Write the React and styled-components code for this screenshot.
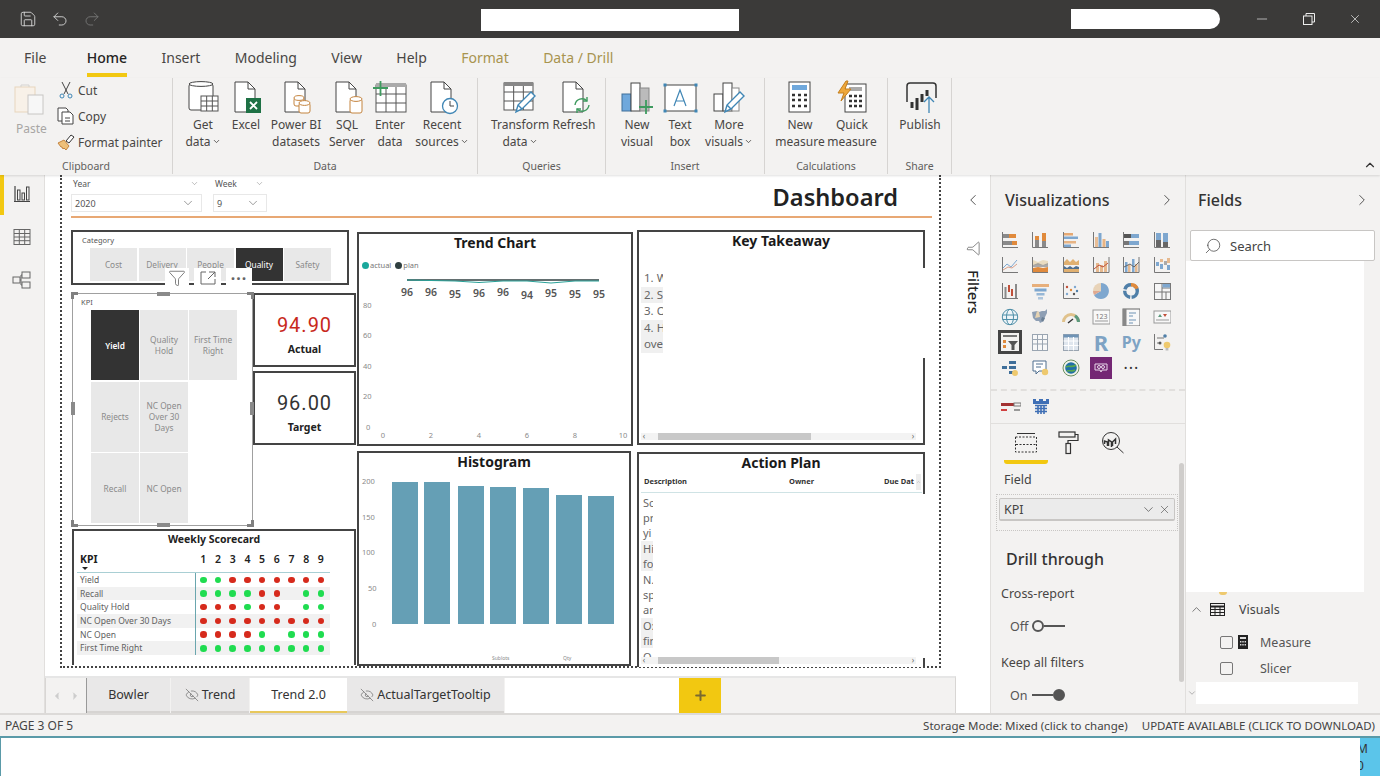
import styled, { createGlobalStyle } from "styled-components";
import {
  Save, Undo2, Redo2, Minus, X, ChevronRight, ChevronLeft, ChevronDown, ChevronUp,
  Search, Plus, Funnel, EyeOff,
} from "lucide-react";

const GlobalStyle = createGlobalStyle`
  * { box-sizing: border-box; }
  html, body { margin: 0; padding: 0; background: #fff; }
  body { font-family: "Noto Sans", "Open Sans", sans-serif; color: #333; }
`;

const O = "#e08a3c";
const B = "#7ea7cf";
const G = "#8a8a8a";
const AX = "#777";

const axes = <path d="M1.5 1v15.5H17" fill="none" stroke={AX} />;

// the 6x6 grid of visual types in the pane
const vizIcons = [
  <>{axes}<rect x="2" y="3" width="6" height="4" fill={G} /><rect x="8" y="3" width="7" height="4" fill={O} /><rect x="2" y="10" width="9" height="4" fill={G} /><rect x="11" y="10" width="5" height="4" fill={O} /></>,
  <>{axes}<rect x="4" y="9" width="4" height="7" fill={G} /><rect x="4" y="5" width="4" height="4" fill={O} /><rect x="11" y="10" width="4" height="6" fill={G} /><rect x="11" y="2" width="4" height="8" fill={O} /></>,
  <>{axes}<rect x="2" y="2" width="9" height="2.5" fill={O} opacity=".7" /><rect x="2" y="5.5" width="14" height="2.5" fill={B} /><rect x="2" y="10" width="12" height="2.5" fill={O} opacity=".6" /><rect x="2" y="13.5" width="7" height="2.5" fill={B} /></>,
  <>{axes}<rect x="3" y="6" width="3" height="10" fill={O} opacity=".5" /><rect x="6.5" y="2" width="3" height="14" fill={B} /><rect x="10.5" y="8" width="3" height="8" fill={O} opacity=".6" /><rect x="14" y="10" width="3" height="6" fill={B} /></>,
  <>{axes}<rect x="2" y="3" width="7" height="4" fill="#555" /><rect x="9" y="3" width="8" height="4" fill={B} /><rect x="2" y="10" width="5" height="4" fill="#777" /><rect x="7" y="10" width="10" height="4" fill={B} /></>,
  <>{axes}<rect x="3" y="2" width="5" height="7" fill={B} /><rect x="3" y="9" width="5" height="7" fill="#666" /><rect x="10" y="2" width="5" height="9" fill={B} /><rect x="10" y="11" width="5" height="5" fill="#666" /></>,
  <>{axes}<path d="M2 12l4-4 4 3 6-7" fill="none" stroke={B} /><path d="M2 14l5-3 4 1 5-4" fill="none" stroke="#d9a08a" /></>,
  <>{axes}<path d="M2 4l5 2 5-2 5 1v4H2z" fill="#e9dcc1" /><path d="M2 9l5-2 5 2 5-2v4H2z" fill={G} opacity=".7" /><path d="M2 12l5-1 5 1 5-1v5H2z" fill={O} /></>,
  <>{axes}<path d="M2 6l3-3 3 3 3-3 3 3 3-2v5H2z" fill="#e0b070" /><path d="M2 10l3 2 3-2 3 2 3-2 3 1v3H2z" fill="#4f6f8f" /><path d="M2 13h15v3H2z" fill="#e0b070" /></>,
  <><path d="M1.5 1v15.5H17V1" fill="none" stroke={AX} /><rect x="4" y="7" width="3" height="9" fill="#e6b98f" /><rect x="8" y="9" width="3" height="7" fill="#e6b98f" /><rect x="12" y="5" width="3" height="11" fill="#e6b98f" /><path d="M2 13l5-4 4 2 5-4" fill="none" stroke="#c0503a" /></>,
  <><path d="M1.5 1v15.5H17V1" fill="none" stroke={AX} /><rect x="3" y="6" width="2.5" height="10" fill={B} /><rect x="6" y="9" width="2.5" height="7" fill="#e6b98f" /><rect x="10" y="3" width="2.5" height="13" fill={B} /><rect x="13" y="8" width="2.5" height="8" fill="#e6b98f" /><path d="M2 11l6-3 4 3 5-5" fill="none" stroke="#666" /></>,
  <>{axes}<rect x="3" y="6" width="3" height="4" fill={B} /><rect x="7" y="3" width="3" height="3" fill="#e6b98f" /><rect x="7" y="8" width="3" height="5" fill={B} /><rect x="11" y="5" width="3" height="4" fill="#aaa" /><rect x="14" y="2" width="3" height="5" fill="#e6b98f" /><rect x="14" y="9" width="3" height="5" fill={B} /></>,
  <>{axes}<rect x="3.5" y="5" width="2" height="11" fill={G} /><rect x="7" y="3" width="2" height="7" fill="#c0503a" /><rect x="10" y="7" width="2" height="7" fill="#c0503a" /><rect x="14" y="2" width="2" height="14" fill={G} /></>,
  <><rect x="1" y="2" width="17" height="3" fill={O} opacity=".65" /><rect x="3.5" y="6.5" width="12" height="3" fill={B} /><rect x="5.5" y="11" width="8" height="2.5" fill={B} opacity=".8" /><rect x="7" y="15" width="5" height="2.5" fill={B} opacity=".6" /></>,
  <>{axes}<circle cx="5" cy="5" r="1.2" fill="#c0503a" /><circle cx="9" cy="8" r="1.2" fill={O} /><circle cx="5" cy="12" r="1.2" fill={B} /><circle cx="13" cy="5" r="1.2" fill={B} /><circle cx="12" cy="12" r="1.2" fill="#555" /><circle cx="15" cy="9" r="1.2" fill="#4f7fa8" /></>,
  <><path d="M9 9V1a8 8 0 1 1-7 12z" fill={B} /><path d="M9 9l-7 4a8 8 0 0 1-1-4z" fill="#e0a990" /><path d="M9 9H1a8 8 0 0 1 8-8z" fill="#e8d3b8" /></>,
  <><circle cx="9" cy="9" r="6.3" fill="none" stroke="#4f7fa8" strokeWidth="3.4" strokeDasharray="9 1.5" /><path d="M9 2.7a6.3 6.3 0 0 1 6 4" fill="none" stroke={O} strokeWidth="3.4" /></>,
  <><rect x="1.5" y="1.5" width="16" height="16" fill="#f6f6f6" stroke="#777" /><path d="M1.5 10h16M9 1.5V17.5M9 6h8.5M13 10v7.5" stroke="#777" fill="none" /><rect x="9.5" y="2" width="7.5" height="3.5" fill={B} /></>,
  <><circle cx="9" cy="9" r="7.7" fill="#eef4f8" stroke="#4f8fa8" /><ellipse cx="9" cy="9" rx="3.5" ry="7.7" fill="none" stroke="#4f8fa8" /><path d="M1.5 7h15M1.5 11.5h15" stroke="#4f8fa8" fill="none" /></>,
  <><path d="M1 4l5-1 2 1 3-1 3 0 2-2 0 4-2 4-1 3-2 2-2 1-1-2-3 0-3-3z" fill="#8e9fb4" /><path d="M6 3l2 1 1 5-5 1z" fill="#e5d3b3" /><path d="M11 9l3 1-2 4-2-2z" fill="#6a7f94" /></>,
  <><path d="M1.5 14a7.5 7.5 0 0 1 15 0" fill="none" stroke="#e0c28c" strokeWidth="3" /><path d="M13 7.7a7.5 7.5 0 0 1 3.5 6.3" fill="none" stroke="#5d9a7d" strokeWidth="3" /><path d="M6 15l5-4" stroke="#333" strokeWidth="1.4" /></>,
  <><rect x="1" y="2" width="17" height="14" fill="#f8f8f8" stroke="#999" /><text x="9.5" y="10.5" textAnchor="middle" fontSize="7" fontFamily="Noto Sans" fill="#777">123</text><path d="M3 13h13" stroke="#999" /></>,
  <><rect x="1" y="1" width="17" height="17" fill="#f8f8f8" stroke="#666" /><rect x="1" y="1" width="3.5" height="17" fill="#888" /><path d="M7 5h7M7 8h4M7 12h7M7 15h4" stroke="#6f93b5" fill="none" /></>,
  <><rect x="1" y="3" width="17" height="12" fill="#f8f8f8" stroke="#999" /><path d="M5 9l2-3 2 3z" fill="#5d9a7d" /><path d="M10 6h4l-2 3z" fill="#c0503a" /><path d="M3 12h13" stroke="#999" /></>,
  <></>,
  <><rect x="1.5" y="1.5" width="15" height="16" fill="#f8f8f8" stroke="#9aa5b1" /><path d="M1.5 6.5h15M1.5 11h15M6.5 1.5v16M11.5 1.5v16" stroke="#9aa5b1" fill="none" /></>,
  <><rect x="1.5" y="1.5" width="15" height="16" fill="#dfe6ee" stroke="#9aa5b1" /><rect x="1.5" y="1.5" width="15" height="3" fill="#6f93b5" /><path d="M1.5 8h15M1.5 12.5h15M6.5 4v13.5M11.5 4v13.5" stroke="#fff" fill="none" /></>,
  <></>,
  <></>,
  <><path d="M1.5 1v15.5H10" fill="none" stroke={AX} /><path d="M4 5h7M4 10h4" stroke="#777" /><circle cx="12" cy="3" r="1.8" fill="#4f7fa8" /><circle cx="7" cy="10" r="1.5" fill="#555" /><circle cx="14" cy="12" r="3.3" fill="#eec96e" /><rect x="12.6" y="15" width="2.8" height="2.5" fill="#bbb" /></>,
  <><rect x="1" y="7" width="5" height="3" fill="#3f6f9a" /><rect x="8" y="2" width="7" height="3" fill="#3f6f9a" /><rect x="8" y="7" width="7" height="3" fill="#3f6f9a" /><rect x="8" y="12" width="4" height="3" fill="#3f6f9a" /><circle cx="14" cy="14" r="3" fill="#eec96e" /></>,
  <><path d="M2 2h13v10H8l-3 3v-3H2z" fill="#fff" stroke="#4f6f8f" /><path d="M5 5h7M5 8h5" stroke="#4f6f8f" /><circle cx="14" cy="13" r="3.2" fill="#eec96e" /></>,
  <><circle cx="9" cy="9" r="8" fill="#eef2e8" stroke="#6b8f5f" /><circle cx="9" cy="9" r="5.8" fill="#1f6fa8" /><path d="M4 8c3-2 6 1 10-2M5 12c3-1 5 1 8-1" stroke="#58a84e" strokeWidth="1.6" fill="none" /></>,
  <></>,
  <></>,
];

const Chart = () => (
  <ChartSvg viewBox="0 0 272 170" width="272" height="170">
    <g fontFamily="Noto Sans" fontSize="7.5" fill="#8a8a8a">
      {[[80, 35], [60, 65], [40, 96], [20, 126], [0, 157]].map(([t, y]) => (
        <text key={t} x={t ? 4 : 7} y={y}>{t}</text>
      ))}
      {[0, 2, 4, 6, 8, 10].map((t) => (
        <text key={t} x={24 + t * 24} y={165} textAnchor="middle">{t}</text>
      ))}
    </g>
    <path d="M48 7H240" stroke="#2f3f40" strokeWidth="1.4" fill="none" />
    <path d="M48 7l48 1 24 1.500 24-1.500 24 0 24 2 24-2H240" stroke="#2aa198" strokeWidth="1.2" fill="none" />
    <g fontFamily="Noto Sans" fontSize="10.5" fontWeight="600" fill="#555" textAnchor="middle">
      {[[96, 23], [96, 23], [95, 25], [96, 24], [96, 23], [94, 26], [95, 24], [95, 25], [95, 25]].map(([v, y], i) => (
        <text key={i} x={48 + i * 24} y={y}>{v}</text>
      ))}
    </g>
  </ChartSvg>
);

const bars = [[33, 482], [65, 482], [99, 486], [131, 487], [164, 488], [197, 495], [229, 496]];

const Histogram = () => (
  <ChartSvg viewBox="0 0 270 192" width="270" height="192">
    <g fontFamily="Noto Sans" fontSize="7.5" fill="#8a8a8a">
      {[[200, 12], [150, 48], [100, 83], [50, 119], [0, 155]].map(([t, y]) => (
        <text key={t} x={t === 0 ? 13 : t === 50 ? 9 : 3} y={y}>{t}</text>
      ))}
      <text x="133" y="188" fontSize="5">Sublots</text>
      <text x="204" y="188" fontSize="5">Qty</text>
    </g>
    {bars.map(([x, top]) => (
      <rect key={x} x={x} y={top - 472} width="26" height={624 - top} fill="#659fb5" />
    ))}
  </ChartSvg>
);

const RibbonGlyph = ({ children }) => (
  <svg width="36" height="36" viewBox="0 0 36 36" fill="none">{children}</svg>
);

const doc = <path d="M7 2h13l7 7v23H7z" fill="#fff" stroke="#444" />;
const fold = <path d="M20 2v7h7" stroke="#444" />;
const cyl = (x, y, w, h, stroke) => (
  <>
    <rect x={x} y={y + 2} width={w} height={h - 2} rx="2" fill="#fff" stroke={stroke} />
    <ellipse cx={x + w / 2} cy={y + 2} rx={w / 2} ry="2.4" fill="#fff" stroke={stroke} />
  </>
);
const tableGlyph = (x, y, w, h) => (
  <>
    <rect x={x} y={y} width={w} height={h} fill="#fff" stroke="#555" />
    <path d={`M${x} ${y + h / 3}h${w}M${x} ${y + (2 * h) / 3}h${w}M${x + w / 3} ${y}v${h}M${x + (2 * w) / 3} ${y}v${h}`} stroke="#555" />
  </>
);
const pencil = <path d="M14 32l2-7 13-13 4 4-13 13z M16 25l4 4" fill="#fff" stroke="#3f86b5" strokeWidth="1.4" />;

const ribbonIcons = {
  data: <RibbonGlyph>{cyl(4, 2, 24, 28, "#444")}{tableGlyph(16, 16, 17, 15)}</RibbonGlyph>,
  excel: <RibbonGlyph>{doc}{fold}<rect x="18" y="18" width="15" height="15" fill="#1e7145" /><path d="M22 22l7 7M29 22l-7 7" stroke="#fff" strokeWidth="1.8" /></RibbonGlyph>,
  datasets: <RibbonGlyph>{doc}{fold}{cyl(16, 16, 10, 10, "#c4843f")}{cyl(21, 21, 11, 12, "#c4843f")}</RibbonGlyph>,
  sql: <RibbonGlyph>{doc}{fold}{cyl(21, 17, 12, 16, "#c4843f")}</RibbonGlyph>,
  enter: <RibbonGlyph>{tableGlyph(4, 5, 30, 27)}<rect x="4" y="3" width="30" height="4" fill="#aaa" /><path d="M1 8h15M8.5 1v15" stroke="#3e9b5f" strokeWidth="1.8" /></RibbonGlyph>,
  recent: <RibbonGlyph>{doc}{fold}<circle cx="26" cy="26" r="7.5" fill="#fff" stroke="#3f86b5" strokeWidth="1.3" /><path d="M26 21v5h4" stroke="#444" /></RibbonGlyph>,
  transform: <RibbonGlyph>{tableGlyph(2, 3, 29, 27)}<rect x="2" y="2" width="29" height="4" fill="#888" />{pencil}</RibbonGlyph>,
  refresh: <RibbonGlyph>{doc}{fold}<path d="M19 25a7 7 0 0 1 12-4M33 25a7 7 0 0 1-12 4" stroke="#3e9b5f" strokeWidth="1.4" /><path d="M31 17v4h-4M21 33v-4h4" stroke="#3e9b5f" strokeWidth="1.4" /></RibbonGlyph>,
  newVisual: <RibbonGlyph><rect x="3" y="14" width="9" height="17" fill="#6fa8dc" stroke="#3f6f9a" /><rect x="12" y="3" width="9" height="28" fill="#fff" stroke="#444" /><rect x="21" y="8" width="9" height="23" fill="#bbb" stroke="#888" /><path d="M20 27h14M27 20v14" stroke="#3e9b5f" strokeWidth="1.8" /></RibbonGlyph>,
  textBox: <RibbonGlyph><rect x="3" y="5" width="31" height="26" fill="#fff" stroke="#444" /><path d="M12 26l6-16 6 16M14.5 21h7" stroke="#3f86b5" strokeWidth="1.2" />{[[3, 5], [34, 5], [3, 31], [34, 31]].map(([x, y]) => <rect key={x + "" + y} x={x - 1.5} y={y - 1.5} width="3" height="3" fill="#3f86b5" />)}</RibbonGlyph>,
  more: <RibbonGlyph><rect x="3" y="14" width="9" height="17" fill="#fff" stroke="#444" /><rect x="12" y="3" width="9" height="28" fill="#fff" stroke="#444" /><rect x="21" y="8" width="7" height="23" fill="#fff" stroke="#888" />{pencil}</RibbonGlyph>,
  measure: <RibbonGlyph><rect x="7" y="2" width="21" height="30" fill="#fff" stroke="#444" /><rect x="10" y="5" width="15" height="5" fill="#6fa8dc" /><path d="M10 15h3M16 15h3M22 15h3M10 20h3M16 20h3M22 20h3M10 26h3M16 26h3M22 26h3" stroke="#333" strokeWidth="2.4" /></RibbonGlyph>,
  quick: <RibbonGlyph><rect x="11" y="4" width="21" height="28" fill="#fff" stroke="#444" /><rect x="15" y="7" width="13" height="4" fill="#aaa" /><path d="M15 16h3M20 16h3M25 16h3M15 21h3M20 21h3M25 21h3M15 26h3M20 26h3M25 26h3" stroke="#333" strokeWidth="2.4" /><path d="M12 1L4 13h6l-3 8 10-12h-6l3-8z" fill="#eea83c" stroke="#c47e1c" /></RibbonGlyph>,
  publish: <RibbonGlyph><path d="M5 22V6a3 3 0 0 1 3-3h23a3 3 0 0 1 3 3v12" stroke="#333" strokeWidth="1.5" /><path d="M10 22v6M15 18v12M20 14v8M25 10v6" stroke="#333" strokeWidth="3" /><path d="M27 33V17M22 22l5-5 5 5" stroke="#3f86b5" strokeWidth="1.3" /></RibbonGlyph>,
};

const CutIcon = () => (
  <svg width="18" height="18" viewBox="0 0 18 18" fill="none">
    <path d="M5 1l6 12M13 1L7 13" stroke="#444" />
    <circle cx="5" cy="15" r="2" stroke="#3f86b5" /><circle cx="13" cy="15" r="2" stroke="#3f86b5" />
  </svg>
);
const CopyIcon = () => (
  <svg width="18" height="18" viewBox="0 0 18 18" fill="none">
    <path d="M5 14H1V1h8l2 2v2" stroke="#444" fill="#fff" />
    <path d="M5 5h8l3 3v9H5z M8 11h5M8 14h5" stroke="#444" fill="#fff" />
  </svg>
);
const PainterIcon = () => (
  <svg width="18" height="18" viewBox="0 0 18 18" fill="none">
    <path d="M1 10l6-3 5 6-3 4-2-2-1 1-1-2-1 0z" fill="#eec07a" stroke="#c4843f" />
    <path d="M9 8l5-6 3 2-5 6z" fill="#fff" stroke="#333" />
  </svg>
);

const ScoreDots = {
  Yield: "ggrrrrrrr",
  Recall: "ggggrr-gg",
  "Quality Hold": "rrrgrr-gg",
  "NC Open Over 30 Days": "rrrrrrrrr",
  "NC Open": "rrrrg-ggg",
  "First Time Right": "ggggggggg",
};

const actionLines = [["Sc", "pr", "yi"], ["Hi", "fo"], ["N.", "sp", "ar"], ["O:", "fir"], ["O"]];

export default function App() {
  return (
    <Shell>
      <GlobalStyle />
      <TitleBar>
        <QuickTools>
          <Save size={18} strokeWidth={1.2} color="#d8d8d8" />
          <Undo2 size={18} strokeWidth={1.2} color="#d8d8d8" />
          <Redo2 size={18} strokeWidth={1.2} color="#777" />
        </QuickTools>
        <TitleBlank />
        <UserBlank />
        <WindowButtons>
          <Minus size={16} strokeWidth={1} color="#eee" />
          <RestoreIcon />
          <X size={14} strokeWidth={1.2} color="#eee" />
        </WindowButtons>
      </TitleBar>

      <MenuTabs>
        <MenuTab>File</MenuTab>
        <MenuTab $active>Home</MenuTab>
        <MenuTab>Insert</MenuTab>
        <MenuTab>Modeling</MenuTab>
        <MenuTab>View</MenuTab>
        <MenuTab>Help</MenuTab>
        <MenuTab $context>Format</MenuTab>
        <MenuTab $context>Data / Drill</MenuTab>
      </MenuTabs>

      <Ribbon>
        <RibbonGroup $w={173} label="Clipboard">
          <PasteButton>
            <svg width="32" height="33" viewBox="0 0 32 33" fill="none">
              <rect x="2" y="5" width="20" height="25" fill="#f8f1e8" stroke="#e8d5bd" />
              <path d="M8 5V3h8v2" stroke="#d5d3d0" />
              <rect x="15" y="13" width="15" height="19" fill="#f7f7f7" stroke="#c8c6c4" />
            </svg>
            <span>Paste</span>
          </PasteButton>
          <SmallTools>
            <SmallTool><CutIcon /> Cut</SmallTool>
            <SmallTool><CopyIcon /> Copy</SmallTool>
            <SmallTool><PainterIcon /> Format painter</SmallTool>
          </SmallTools>
        </RibbonGroup>
        <RibbonGroup $w={305} $pad={8} label="Data">
          <RibbonButton $w={44} icon={ribbonIcons.data} top="Get" bottom="data" caret />
          <RibbonButton $w={42} icon={ribbonIcons.excel} top="Excel" />
          <RibbonButton $w={58} icon={ribbonIcons.datasets} top="Power BI" bottom="datasets" />
          <RibbonButton $w={44} icon={ribbonIcons.sql} top="SQL" bottom="Server" />
          <RibbonButton $w={42} icon={ribbonIcons.enter} top="Enter" bottom="data" />
          <RibbonButton $w={62} icon={ribbonIcons.recent} top="Recent" bottom="sources" caret />
        </RibbonGroup>
        <RibbonGroup $w={128} $pad={12} label="Queries">
          <RibbonButton $w={60} icon={ribbonIcons.transform} top="Transform" bottom="data" caret />
          <RibbonButton $w={48} icon={ribbonIcons.refresh} top="Refresh" />
        </RibbonGroup>
        <RibbonGroup $w={159} $pad={9} label="Insert">
          <RibbonButton $w={44} icon={ribbonIcons.newVisual} top="New" bottom="visual" />
          <RibbonButton $w={42} icon={ribbonIcons.textBox} top="Text" bottom="box" />
          <RibbonButton $w={56} icon={ribbonIcons.more} top="More" bottom="visuals" caret />
        </RibbonGroup>
        <RibbonGroup $w={123} $pad={9} label="Calculations">
          <RibbonButton $w={52} icon={ribbonIcons.measure} top="New" bottom="measure" />
          <RibbonButton $w={52} icon={ribbonIcons.quick} top="Quick" bottom="measure" />
        </RibbonGroup>
        <RibbonGroup $w={64} $pad={7} label="Share">
          <RibbonButton $w={50} icon={ribbonIcons.publish} top="Publish" />
        </RibbonGroup>
        <RibbonEnd>
          <ChevronUp size={14} strokeWidth={2} color="#333" />
        </RibbonEnd>
      </Ribbon>

      <Body>
        <Rail>
          <RailItem $active>
            <svg width="18" height="18" viewBox="0 0 18 18" fill="none" stroke="#444">
              <path d="M2 1v15M1 16.5h16" strokeWidth="1.2" />
              <rect x="4.5" y="5" width="2.5" height="10" /><rect x="9" y="8" width="2.5" height="7" /><rect x="13.5" y="2" width="2.5" height="13" />
            </svg>
          </RailItem>
          <RailItem>
            <svg width="18" height="18" viewBox="0 0 18 18" fill="none" stroke="#666">
              <rect x="1" y="1.5" width="16" height="15" />
              <path d="M1 5.5h16M1 9h16M1 12.700h16M6.300 1.500v15M11.700 1.500v15" />
            </svg>
          </RailItem>
          <RailItem>
            <svg width="20" height="20" viewBox="0 0 20 20" fill="none" stroke="#666">
              <rect x="1" y="7" width="7" height="6" /><rect x="10" y="2" width="8" height="6" />
              <rect x="10" y="12" width="8" height="6" /><path d="M8 10h1V5h1M9 10v5h1" />
            </svg>
          </RailItem>
        </Rail>

        <Center>
          <Canvas>
            <Page>
              <PageHeader>
                <Slicer $w={131} $mr={11}>
                  <SlicerHead>Year <ChevronDown size={9} strokeWidth={1} /></SlicerHead>
                  <SlicerBox>2020 <ChevronDown size={14} strokeWidth={1} /></SlicerBox>
                </Slicer>
                <Slicer $w={54}>
                  <SlicerHead>Week <ChevronDown size={9} strokeWidth={1} /></SlicerHead>
                  <SlicerBox>9 <ChevronDown size={14} strokeWidth={1} /></SlicerBox>
                </Slicer>
                <DashboardTitle>Dashboard</DashboardTitle>
              </PageHeader>

              <Board>
                <LeftColumn>
                  <CategoryBox>
                    <SmallCaption>Category</SmallCaption>
                    <CategoryRow>
                      <Tile>Cost</Tile>
                      <Tile>Delivery</Tile>
                      <Tile>People</Tile>
                      <Tile $on>Quality</Tile>
                      <Tile>Safety</Tile>
                    </CategoryRow>
                  </CategoryBox>

                  <KpiRow>
                    <KpiBox>
                      <VisualHeader>
                        <HeaderButton $w={24}><Funnel size={18} strokeWidth={1} color="#555" /></HeaderButton>
                        <HeaderButton $w={27}>
                          <svg width="16" height="14" viewBox="0 0 16 14" fill="none" stroke="#666">
                            <path d="M6 1H1v12h14V8M9 1h6v5M15 1L8 8" />
                          </svg>
                        </HeaderButton>
                        <HeaderButton $w={26}><Dots>···</Dots></HeaderButton>
                      </VisualHeader>
                      <Corner $v="top" $h="left" />
                      <Corner $v="top" $h="right" />
                      <Corner $v="bottom" $h="left" />
                      <Corner $v="bottom" $h="right" />
                      <EdgeHandle $side="top" />
                      <EdgeHandle $side="bottom" />
                      <EdgeHandle $side="left" />
                      <EdgeHandle $side="right" />
                      <SmallCaption>KPI</SmallCaption>
                      <KpiGrid>
                        <Tile $on $bold>Yield</Tile>
                        <Tile>Quality<br />Hold</Tile>
                        <Tile>First Time<br />Right</Tile>
                        <Tile>Rejects</Tile>
                        <Tile>NC Open<br />Over 30<br />Days</Tile>
                        <span />
                        <Tile>Recall</Tile>
                        <Tile>NC Open</Tile>
                      </KpiGrid>
                    </KpiBox>
                    <KpiCards>
                      <CardBox $h={74}>
                        <CardValue $red>94.90</CardValue>
                        <CardLabel>Actual</CardLabel>
                      </CardBox>
                      <CardBox $h={74}>
                        <CardValue>96.00</CardValue>
                        <CardLabel>Target</CardLabel>
                      </CardBox>
                    </KpiCards>
                  </KpiRow>

                  <ScoreBox>
                    <ScoreTitle>Weekly Scorecard</ScoreTitle>
                    <ScoreTable>
                      <ScoreHead>
                        <span>KPI<SortArrow /></span>
                        {[1, 2, 3, 4, 5, 6, 7, 8, 9].map((n) => <b key={n}>{n}</b>)}
                      </ScoreHead>
                      {Object.entries(ScoreDots).map(([name, dots], i) => (
                        <ScoreRow key={name} $alt={i % 2 === 1}>
                          <ScoreName>{name}</ScoreName>
                          {dots.split("").map((d, j) => (
                            <DotCell key={j}>{d !== "-" && <Dot $c={d} />}</DotCell>
                          ))}
                        </ScoreRow>
                      ))}
                    </ScoreTable>
                  </ScoreBox>
                </LeftColumn>

                <MiddleColumn>
                  <Panel $w={276} $h={214}>
                    <PanelTitle>Trend Chart</PanelTitle>
                    <Legend>
                      <LegendDot $c="#1aa89c" /> actual <LegendDot $c="#2f3f40" /> plan
                    </Legend>
                    <Chart />
                  </Panel>
                  <Panel $w={274} $h={215}>
                    <PanelTitle>Histogram</PanelTitle>
                    <Histogram />
                  </Panel>
                </MiddleColumn>

                <RightColumn>
                  <Panel $w={288} $h={215}>
                    <Cover $top={36} $h={90} />
                    <PanelTitle>Key Takeaway</PanelTitle>
                    <TakeList>
                      <TakeRow>1. W</TakeRow>
                      <TakeRow $alt>2. S</TakeRow>
                      <TakeRow>3. O</TakeRow>
                      <TakeRow $alt>4. H<br />over</TakeRow>
                    </TakeList>
                    <HScroll $left={17} $thumb={153} />
                  </Panel>
                  <Panel $w={288} $h={215} $open>
                    <Cover $top={40} $h={164} />
                    <PanelTitle>Action Plan</PanelTitle>
                    <ActionHead>
                      <span>Description</span>
                      <span>Owner</span>
                      <DueCol>Due Dat</DueCol>
                      <ScrollUp><ChevronUp size={6} strokeWidth={1.5} /></ScrollUp>
                    </ActionHead>
                    <ActionBody>
                      {actionLines.map((lines, i) => (
                        <ActionRow key={i} $alt={i % 2 === 1}>
                          {lines.map((t) => <div key={t}>{t}</div>)}
                        </ActionRow>
                      ))}
                    </ActionBody>
                    <HScroll $left={17} $thumb={121} />
                  </Panel>
                </RightColumn>
              </Board>
            </Page>
          </Canvas>

          <PageTabs>
            <NavBox>
              <ChevronLeft size={12} color="#ccc" fill="#ccc" />
              <ChevronRight size={12} color="#ccc" fill="#ccc" />
            </NavBox>
            <PageTab $w={83}>Bowler</PageTab>
            <PageTab $w={78}><EyeOff size={14} strokeWidth={1} color="#555" />Trend</PageTab>
            <PageTab $w={97} $active>Trend 2.0</PageTab>
            <PageTab $w={157}><EyeOff size={14} strokeWidth={1} color="#555" />ActualTargetTooltip</PageTab>
            <TabBlank />
            <AddTab><Plus size={15} strokeWidth={3.2} color="#7a6a30" /></AddTab>
          </PageTabs>
        </Center>

        <FiltersRail>
          <ChevronLeft size={18} strokeWidth={1.1} color="#333" />
          <FunnelSide>
            <Funnel size={15} strokeWidth={1} color="#444" />
          </FunnelSide>
          <FiltersLabel>Filters</FiltersLabel>
        </FiltersRail>

        <VizPane>
          <PaneHead $pl={14} $pr={9}>
            <PaneTitle>Visualizations</PaneTitle>
            <ChevronRight size={18} strokeWidth={1.1} color="#333" />
          </PaneHead>
          <VizGrid>
            {vizIcons.map((icon, i) => (
              <VizCell key={i} $purple={i === 33}>
                {i === 24 ? <SlicerGlyph /> : null}
                {i === 27 ? <ScriptMark>R</ScriptMark> : null}
                {i === 28 ? <ScriptMark $small>Py</ScriptMark> : null}
                {i === 33 ? <PowerApps /> : null}
                {i === 34 ? <MoreDots>···</MoreDots> : null}
                {![24, 27, 28, 33, 34].includes(i) ? (
                  <svg width="18" height="18" viewBox="0 0 18 18">{icon}</svg>
                ) : null}
              </VizCell>
            ))}
          </VizGrid>
          <ExtraIcons>
            <svg width="20" height="12" viewBox="0 0 20 12">
              <rect x="0" y="2" width="13" height="3" fill="#a33232" /><rect x="13" y="2" width="7" height="3" fill="none" stroke="#777" />
              <rect x="0" y="8" width="6" height="2" fill="#d04040" /><rect x="13" y="8" width="6" height="2" fill="#999" />
            </svg>
            <svg width="18" height="18" viewBox="0 0 18 18" fill="#3f6fb5">
              <path d="M1 1h3v2h3V1h4v2h3V1h3v5H1z" />
              <path d="M3 7.500h12M3 10.500h12M3 13.500h12M6 7v9M9 7v9M12 7v9" stroke="#3f6fb5" strokeWidth="1.6" />
            </svg>
          </ExtraIcons>
          <PaneTabs>
            <PaneTab $active>
              <svg width="24" height="22" viewBox="0 0 24 22" fill="none" stroke="#333">
                <path d="M3 1.500h18" />
                <rect x="1.500" y="5" width="21" height="15" strokeDasharray="2 1.500" />
                <path d="M2 12.500h20" strokeDasharray="2 1.500" />
              </svg>
            </PaneTab>
            <PaneTab>
              <svg width="22" height="24" viewBox="0 0 22 24" fill="none" stroke="#333" strokeWidth="1.2">
                <rect x="1" y="1" width="16" height="5" />
                <path d="M17 3.500h3v6H10v3" />
                <rect x="8" y="12.500" width="4.500" height="10" />
              </svg>
            </PaneTab>
            <PaneTab>
              <svg width="24" height="24" viewBox="0 0 24 24" fill="none" stroke="#333">
                <circle cx="10" cy="10" r="8.500" />
                <path d="M16 16l6.500 6" />
                <path d="M3.500 13v-3l3 1v4M7.500 15V9l3 2v5M11.500 15v-4l3-3v5" strokeWidth="1.500" />
              </svg>
            </PaneTab>
          </PaneTabs>
          <FieldLabel>Field</FieldLabel>
          <FieldWell>
            <FieldPill>
              <span>KPI</span>
              <PillIcons>
                <ChevronDown size={15} strokeWidth={1} color="#333" />
                <X size={13} strokeWidth={1} color="#333" />
              </PillIcons>
            </FieldPill>
          </FieldWell>
          <DrillTitle>Drill through</DrillTitle>
          <OptionLabel>Cross-report</OptionLabel>
          <Toggle>
            <span>Off</span>
            <ToggleSwitch><ToggleKnob /><ToggleTrack /></ToggleSwitch>
          </Toggle>
          <OptionLabel $mt={19}>Keep all filters</OptionLabel>
          <Toggle>
            <span>On</span>
            <ToggleSwitch $on><ToggleKnob $on /><ToggleTrack /></ToggleSwitch>
          </Toggle>
          <PaneScroll />
        </VizPane>

        <FieldsPane>
          <PaneHead $pl={12} $pr={9}>
            <PaneTitle>Fields</PaneTitle>
            <ChevronRight size={18} strokeWidth={1.1} color="#333" />
          </PaneHead>
          <SearchBox>
            <Search size={18} strokeWidth={1} style={{ transform: "scaleX(-1)" }} />
            Search
          </SearchBox>
          <FieldsBlank />
          <TableRow>
            <ChevronUp size={15} strokeWidth={1} color="#333" />
            <svg width="15" height="13" viewBox="0 0 15 13" fill="none" stroke="#222">
              <rect x=".5" y=".5" width="14" height="12" />
              <path d="M.5 3.500h14" strokeWidth="2" />
              <path d="M.5 6.500h14M.5 9.500h14M5 3v10M10 3v10" />
            </svg>
            <span>Visuals</span>
          </TableRow>
          <CheckRow $mt={3}>
            <CheckBox />
            <CalcSlot>
              <svg width="10" height="14" viewBox="0 0 10 14" fill="#222">
                <path d="M0 0h10v14H0z" />
                <path d="M2 2h6v2H2zM2 6h1.400v1.400H2zM4.300 6h1.400v1.400H4.300zM6.600 6H8v1.400H6.600zM2 9h1.400v1.400H2zM4.300 9h1.400v1.400H4.300zM6.600 9H8v1.400H6.600z" fill="#ddd" />
              </svg>
            </CalcSlot>
            Measure
          </CheckRow>
          <CheckRow>
            <CheckBox />
            <CalcSlot />
            Slicer
          </CheckRow>
          <FieldsFooter>
            <ChevronDown size={10} strokeWidth={1} color="#555" />
            <FooterBlank />
          </FieldsFooter>
        </FieldsPane>
      </Body>

      <StatusBar>
        <span>PAGE 3 OF 5</span>
        <StatusRight>
          <span>Storage Mode: Mixed (click to change)</span>
          <span>UPDATE AVAILABLE (CLICK TO DOWNLOAD)</span>
        </StatusRight>
      </StatusBar>
      <Taskbar>
        <TaskTile><span>M</span><span>0</span></TaskTile>
      </Taskbar>
    </Shell>
  );
}

const RestoreIcon = () => (
  <svg width="12" height="12" viewBox="0 0 12 12" fill="none" stroke="#eee">
    <rect x=".5" y="3" width="8.500" height="8.500" />
    <path d="M3 3V.5h8.500V9H9" />
  </svg>
);

const SlicerGlyph = () => (
  <svg width="24" height="24" viewBox="0 0 24 24">
    <rect x="1.500" y="1.500" width="21" height="21" fill="#f3f2f1" stroke="#444" strokeWidth="3" />
    <rect x="5" y="5" width="14" height="2" fill="#777" />
    <path d="M5 10h3v3H5zM5 15h3v3H5z" fill="#e08a3c" />
    <path d="M10 11h10l-3.500 4v5h-3v-5z" fill="#555" />
  </svg>
);

const PowerApps = () => (
  <svg width="14" height="10" viewBox="0 0 14 10" fill="none" stroke="#e8d8ea">
    <path d="M1 1h12v6H8l-1 2-1-2H1z" />
    <circle cx="5" cy="4" r="1.500" /><circle cx="9" cy="4" r="1.500" />
  </svg>
);

const RibbonGroup = ({ $w, $pad = 0, label, children }) => (
  <GroupFrame $w={$w}>
    <GroupBody $pad={$pad}>{children}</GroupBody>
    <GroupLabel>{label}</GroupLabel>
  </GroupFrame>
);

const RibbonButton = ({ $w, icon, top, bottom, caret }) => (
  <BigButton $w={$w}>
    <IconSlot>{icon}</IconSlot>
    <span>{top}</span>
    {bottom && (
      <span>
        {bottom}
        {caret && <ChevronDown size={9} strokeWidth={2.2} style={{ marginLeft: 1 }} />}
      </span>
    )}
  </BigButton>
);

const HScroll = ({ $left, $thumb }) => (
  <ScrollTrack>
    <ScrollArrow>‹</ScrollArrow>
    <ScrollThumb $left={$left} $w={$thumb} />
    <ScrollArrow $end>›</ScrollArrow>
  </ScrollTrack>
);

const Shell = styled.div`
  width: 1380px;
  height: 776px;
  overflow: hidden;
  display: flex;
  flex-direction: column;
  background: #f3f2f1;
`;

const TitleBar = styled.header`
  height: 38px;
  background: #3b3a39;
  display: flex;
  align-items: center;
  flex-shrink: 0;
`;

const QuickTools = styled.div`
  display: flex;
  align-items: center;
  gap: 14px;
  padding-left: 19px;
  width: 481px;
`;

const TitleBlank = styled.div`
  width: 258px;
  height: 22px;
  background: #fff;
  margin-right: 332px;
  margin-top: 2px;
`;

const UserBlank = styled.div`
  width: 149px;
  height: 20px;
  background: #fff;
  border-radius: 0 10px 10px 0;
`;

const WindowButtons = styled.div`
  margin-left: 34px;
  display: flex;
  align-items: center;
  gap: 33px;
  width: 126px;
`;

const MenuTabs = styled.nav`
  height: 40px;
  display: flex;
  align-items: stretch;
  padding-left: 24px;
  gap: 34.400px;
  flex-shrink: 0;
`;

const MenuTab = styled.div`
  font-size: 14px;
  height: 39px;
  display: flex;
  align-items: center;
  padding-top: 3px;
  color: ${(p) => (p.$context ? "#a8944f" : p.$active ? "#252423" : "#484644")};
  font-weight: ${(p) => (p.$active ? 500 : 400)};
  border-bottom: 4px solid ${(p) => (p.$active ? "#f2c811" : "transparent")};
  margin-left: ${(p) => (p.$active ? "6px" : "0")};
`;

const Ribbon = styled.div`
  height: 97px;
  display: flex;
  flex-shrink: 0;
  box-shadow: 0 1px 2px rgba(0, 0, 0, 0.12);
  position: relative;
  z-index: 2;
`;

const GroupFrame = styled.section`
  width: ${(p) => p.$w}px;
  height: 96px;
  border-right: 1px solid #d6d4d2;
  display: flex;
  flex-direction: column;
  flex-shrink: 0;
`;

const GroupBody = styled.div`
  flex: 1;
  display: flex;
  padding-left: ${(p) => p.$pad}px;
`;

const GroupLabel = styled.div`
  font-size: 10.5px;
  color: #605e5c;
  text-align: center;
  line-height: 15px;
  height: 15px;
`;

const RibbonEnd = styled.div`
  flex: 1;
  display: flex;
  justify-content: flex-end;
  align-items: flex-end;
  padding: 0 3px 3px 0;
`;

const BigButton = styled.div`
  width: ${(p) => p.$w}px;
  flex-shrink: 0;
  display: flex;
  flex-direction: column;
  align-items: center;
  font-size: 12px;
  line-height: 17px;
  color: #484644;
  white-space: nowrap;
  span { display: flex; align-items: center; }
`;

const IconSlot = styled.div`
  height: 38px;
  padding-top: 2px;
  display: flex;
  justify-content: center;
`;

const PasteButton = styled.div`
  width: 57px;
  padding: 4px 0 0 13px;
  display: flex;
  flex-direction: column;
  align-items: flex-start;
  font-size: 12px;
  color: #a8a6a4;
  span { margin: 5px 0 0 3px; }
`;

const SmallTools = styled.div`
  margin-top: -1px;
  display: flex;
  flex-direction: column;
`;

const SmallTool = styled.div`
  height: 26px;
  display: flex;
  align-items: center;
  gap: 3px;
  font-size: 12px;
  color: #484644;
  white-space: nowrap;
`;

const Body = styled.main`
  height: 538px;
  display: flex;
  flex-shrink: 0;
`;

const Rail = styled.aside`
  width: 45px;
  flex-shrink: 0;
  border-right: 1px solid #e1dfdd;
  display: flex;
  flex-direction: column;
  gap: 3px;
`;

const RailItem = styled.div`
  height: 40px;
  display: flex;
  align-items: center;
  justify-content: center;
  padding: 0 4px 2px 0;
  border-left: 4px solid ${(p) => (p.$active ? "#f2c811" : "transparent")};
`;

const Center = styled.div`
  width: 911px;
  flex-shrink: 0;
  display: flex;
  flex-direction: column;
`;

const Canvas = styled.div`
  height: 501px;
  background: #fff;
  padding-left: 15px;
  overflow: hidden;
`;

const Page = styled.div`
  width: 881px;
  height: 493px;
  border: 2px dotted #444;
  border-top: 0;
  padding: 0 7px 0 9px;
  position: relative;
`;

const PageHeader = styled.div`
  height: 43px;
  border-bottom: 2px solid #e8a874;
  display: flex;
  align-items: flex-start;
`;

const Slicer = styled.div`
  width: ${(p) => p.$w}px;
  margin-right: ${(p) => p.$mr || 0}px;
  color: #555;
`;

const SlicerHead = styled.div`
  height: 16px;
  margin-bottom: 3px;
  padding: 0 3px 0 2px;
  display: flex;
  justify-content: space-between;
  align-items: center;
  font-size: 8.5px;
`;

const SlicerBox = styled.div`
  height: 18px;
  border: 1px solid #e8e8e8;
  padding: 0 6px 0 3px;
  display: flex;
  align-items: center;
  justify-content: space-between;
  font-size: 9px;
`;

const DashboardTitle = styled.h1`
  margin: 10px 34px 0 auto;
  font-size: 23.600px;
  line-height: 24px;
  font-weight: 600;
  color: #222;
`;

const Board = styled.div`
  display: flex;
  padding-top: 12px;
`;

const LeftColumn = styled.div`
  width: 286px;
  display: flex;
  flex-direction: column;
`;

const CategoryBox = styled.div`
  width: 278px;
  height: 55px;
  border: 2px solid #444;
  padding-left: 9px;
`;

const SmallCaption = styled.div`
  font-size: 7.5px;
  line-height: 10px;
  color: #555;
  padding-top: 3px;
  height: 16px;
`;

const CategoryRow = styled.div`
  display: flex;
  gap: 1.5px;
  margin-left: 8px;
  height: 33px;
  > * { width: 47px; }
`;

const Tile = styled.div`
  background: ${(p) => (p.$on ? "#333" : "#e8e8e8")};
  color: ${(p) => (p.$on ? "#fff" : "#8a8a8a")};
  font-weight: ${(p) => (p.$bold ? 600 : 400)};
  font-size: 8.300px;
  line-height: 11px;
  text-align: center;
  display: flex;
  align-items: center;
  justify-content: center;
`;

const KpiRow = styled.div`
  display: flex;
  margin-top: 8px;
  height: 238px;
`;

const KpiBox = styled.div`
  width: 181px;
  height: 233px;
  border: 1px solid #a0a0a0;
  padding-left: 8px;
  margin-left: 1px;
  position: relative;
`;

const VisualHeader = styled.div`
  position: absolute;
  top: -26px;
  left: 92px;
  display: flex;
  gap: 5px;
  z-index: 3;
`;

const HeaderButton = styled.div`
  width: ${(p) => p.$w}px;
  height: 19px;
  background: #fff;
  display: flex;
  align-items: center;
  justify-content: center;
`;

const Dots = styled.span`
  font-size: 16px;
  line-height: 16px;
  color: #666;
  letter-spacing: 1px;
  font-weight: 700;
`;

const Corner = styled.i`
  position: absolute;
  width: 7px;
  height: 7px;
  ${(p) => p.$v}: -2px;
  ${(p) => p.$h}: -2px;
  border-${(p) => p.$v}: 3px solid #808080;
  border-${(p) => p.$h}: 3px solid #808080;
`;

const EdgeHandle = styled.i`
  position: absolute;
  background: #8a8a8a;
  ${(p) =>
    p.$side === "top" || p.$side === "bottom"
      ? `width: 13px; height: 4px; left: 84px; ${p.$side}: -2px;`
      : `width: 4px; height: 13px; top: 108px; ${p.$side}: -2px;`}
`;

const KpiGrid = styled.div`
  display: grid;
  grid-template-columns: repeat(3, 48px);
  grid-auto-rows: 70px;
  column-gap: 1px;
  row-gap: 1.500px;
  margin: 0 0 0 10px;
`;

const KpiCards = styled.div`
  display: flex;
  flex-direction: column;
  gap: 4px;
`;

const CardBox = styled.div`
  width: 103px;
  height: ${(p) => p.$h}px;
  border: 2px solid #444;
  display: flex;
  flex-direction: column;
  align-items: center;
  justify-content: center;
`;

const CardValue = styled.div`
  font-family: Roboto, sans-serif;
  font-size: 20px;
  line-height: 30px;
  letter-spacing: 1px;
  color: ${(p) => (p.$red ? "#c8291c" : "#333")};
  margin-top: 8px;
`;

const CardLabel = styled.div`
  font-size: 10.5px;
  font-weight: 700;
  color: #222;
  line-height: 18px;
`;

const ScoreBox = styled.div`
  width: 284px;
  height: 136px;
  margin-left: 1px;
  margin-top: -2px;
  border: 2px solid #444;
  border-bottom-width: 0;
`;

const ScoreTitle = styled.div`
  font-size: 10.5px;
  font-weight: 700;
  color: #222;
  text-align: center;
  line-height: 16px;
  height: 14px;
`;

const ScoreTable = styled.div`
  padding: 4px 0 0 3px;
`;

const ScoreHead = styled.div`
  display: grid;
  grid-template-columns: 119px repeat(9, 14.7px);
  width: 253px;
  height: 24px;
  font-size: 10.5px;
  line-height: 14px;
  color: #222;
  border-bottom: 1px solid #a9cfd4;
  padding-top: 3px;
  span { padding-left: 3px; font-weight: 700; position: relative; }
  b { text-align: center; font-weight: 600; }
`;

const SortArrow = styled.i`
  position: absolute;
  left: 5px;
  top: 15px;
  border: 3px solid transparent;
  border-top: 3px solid #222;
  border-bottom-width: 0;
`;

const ScoreRow = styled.div`
  display: grid;
  grid-template-columns: 119px repeat(9, 14.7px);
  width: 253px;
  height: 13.700px;
  background: ${(p) => (p.$alt ? "#f1f1f1" : "#fff")};
`;

const ScoreName = styled.div`
  font-size: 8.5px;
  line-height: 13.700px;
  color: #606060;
  padding-left: 3px;
  border-right: 1px solid #6aa6ae;
  white-space: nowrap;
`;

const DotCell = styled.div`
  display: flex;
  align-items: center;
  justify-content: center;
`;

const Dot = styled.i`
  width: 6.500px;
  height: 6.500px;
  border-radius: 50%;
  background: ${(p) => (p.$c === "g" ? "#1fdc50" : "#d62a1c")};
`;

const MiddleColumn = styled.div`
  width: 280px;
  display: flex;
  flex-direction: column;
  gap: 5px;
  padding-top: 2px;
`;

const RightColumn = styled.div`
  width: 288px;
  display: flex;
  flex-direction: column;
  gap: 7px;
`;

const Panel = styled.div`
  width: ${(p) => p.$w}px;
  height: ${(p) => p.$h}px;
  border: 2px solid #444;
  border-bottom-width: ${(p) => (p.$open ? 0 : 2)}px;
  position: relative;
  display: flex;
  flex-direction: column;
  background: #fff;
`;

const PanelTitle = styled.div`
  font-size: 14px;
  font-weight: 700;
  color: #1a1a1a;
  text-align: center;
  line-height: 18px;
  height: 20px;
  flex-shrink: 0;
`;

const Legend = styled.div`
  font-size: 7.500px;
  color: #777;
  display: flex;
  align-items: center;
  gap: 1px;
  height: 18px;
  margin-top: 2px;
  flex-shrink: 0;
`;

const LegendDot = styled.i`
  width: 7px;
  height: 7px;
  border-radius: 50%;
  background: ${(p) => p.$c};
  margin-left: 3px;
`;

const ChartSvg = styled.svg`
  display: block;
  margin-top: -1px;
  flex-shrink: 0;
`;

const Cover = styled.div`
  position: absolute;
  right: -3px;
  top: ${(p) => p.$top}px;
  height: ${(p) => p.$h}px;
  width: 6px;
  background: #fff;
`;

const TakeList = styled.div`
  margin: 18px 0 0 2px;
  width: 22px;
  height: 160px;
  overflow: hidden;
  white-space: nowrap;
  flex-shrink: 0;
`;

const TakeRow = styled.div`
  font-size: 11.500px;
  line-height: 16.500px;
  color: #666;
  padding-left: 3px;
  background: ${(p) => (p.$alt ? "#f0f0f0" : "#fff")};
`;

const ScrollTrack = styled.div`
  width: 275px;
  height: 7px;
  margin: auto 0 3px 2px;
  background: #f3f3f3;
  display: flex;
  flex-shrink: 0;
`;

const ScrollThumb = styled.div`
  width: ${(p) => p.$w}px;
  height: 100%;
  background: #c8c8c8;
  margin-left: ${(p) => p.$left - 6}px;
`;

const ScrollArrow = styled.span`
  width: 6px;
  font-size: 8px;
  line-height: 6px;
  color: #666;
  text-align: center;
  margin-left: ${(p) => (p.$end ? "auto" : "0")};
`;

const ActionHead = styled.div`
  display: flex;
  font-size: 7.500px;
  font-weight: 700;
  color: #333;
  height: 19px;
  margin: 0 1px 0 2px;
  padding: 2px 0 0 3px;
  border-bottom: 1px solid #cfe3e5;
  flex-shrink: 0;
  span:nth-child(1) { width: 145px; }
  span:nth-child(2) { width: 95px; }
`;

const DueCol = styled.span`
  width: 32px;
  overflow: hidden;
  white-space: nowrap;
`;

const ScrollUp = styled.div`
  width: 5px;
  height: 16px;
  background: #ededed;
  color: #888;
  display: flex;
  align-items: center;
  overflow: hidden;
  margin-top: -2px;
`;

const ActionBody = styled.div`
  margin: 2px 0 0 2px;
  width: 12px;
  height: 162px;
  overflow: hidden;
  flex-shrink: 0;
`;

const ActionRow = styled.div`
  font-size: 11px;
  line-height: 15px;
  color: #666;
  padding-left: 2px;
  white-space: nowrap;
  background: ${(p) => (p.$alt ? "#f0f0f0" : "#fff")};
  margin-bottom: 1px;
`;

const PageTabs = styled.div`
  height: 37px;
  display: flex;
  border-top: 2px solid #e6e6e6;
  border-right: 1px solid #d8d6d4;
  background: #f3f2f1;
`;

const NavBox = styled.div`
  width: 42px;
  display: flex;
  align-items: center;
  justify-content: center;
  gap: 6px;
  border-left: 1px solid #d8d6d4;
  border-right: 1px solid #999;
`;

const PageTab = styled.div`
  width: ${(p) => p.$w}px;
  margin-right: ${(p) => (p.$active ? 0 : 1)}px;
  background: ${(p) => (p.$active ? "#fff" : "#e9e8e8")};
  border-bottom: 2px solid ${(p) => (p.$active ? "#e8c85c" : "#d6d4d2")};
  font-size: 12.500px;
  color: #333;
  display: flex;
  align-items: center;
  justify-content: center;
  gap: 3px;
`;

const TabBlank = styled.div`
  width: 174px;
  background: #fff;
`;

const AddTab = styled.div`
  width: 42px;
  background: #f2c811;
  display: flex;
  align-items: center;
  justify-content: center;
`;

const FiltersRail = styled.aside`
  width: 34px;
  flex-shrink: 0;
  background: #fff;
  display: flex;
  flex-direction: column;
  align-items: center;
  padding-top: 16px;
`;

const FunnelSide = styled.div`
  margin: 32px 0 0 5px;
  transform: rotate(90deg);
  height: 15px;
`;

const FiltersLabel = styled.div`
  writing-mode: vertical-rl;
  font-size: 15px;
  font-weight: 500;
  color: #222;
  margin: 14px 0 0 2px;
`;

const VizPane = styled.section`
  width: 196px;
  flex-shrink: 0;
  border-left: 1px solid #e1dfdd;
  border-right: 1px solid #e1dfdd;
  position: relative;
`;

const PaneHead = styled.div`
  height: 52px;
  display: flex;
  align-items: center;
  justify-content: space-between;
  padding: 0 ${(p) => p.$pr}px 2px ${(p) => p.$pl}px;
`;

const PaneTitle = styled.h2`
  margin: 0;
  font-size: 16px;
  font-weight: 500;
  color: #333;
`;

const VizGrid = styled.div`
  display: grid;
  grid-template-columns: repeat(6, 30.300px);
  grid-auto-rows: 25.600px;
  padding-left: 4px;
  height: 164px;
  border-bottom: 2px dashed #e1dfdd;
`;

const VizCell = styled.div`
  display: flex;
  align-items: center;
  justify-content: center;
  position: relative;
  ${(p) =>
    p.$purple &&
    `&::before { content: ""; position: absolute; inset: 2px 4px; background: #742774; }
     > * { position: relative; }`}
`;

const ScriptMark = styled.span`
  font-size: ${(p) => (p.$small ? 16 : 22)}px;
  font-weight: 700;
  color: #7ea3c4;
  line-height: 1;
`;

const MoreDots = styled.span`
  font-size: 16px;
  font-weight: 400;
  letter-spacing: 1px;
  color: #333;
  line-height: 1;
`;

const ExtraIcons = styled.div`
  height: 33px;
  display: flex;
  align-items: center;
  gap: 11px;
  padding-left: 10px;
  border-bottom: 1px solid #e1dfdd;
`;

const PaneTabs = styled.div`
  display: flex;
  padding-left: 13px;
  height: 40px;
`;

const PaneTab = styled.div`
  width: 43.500px;
  height: 40px;
  display: flex;
  align-items: center;
  justify-content: center;
  padding-top: 2px;
  border-bottom: 4px solid ${(p) => (p.$active ? "#f2c811" : "transparent")};
  border-radius: 0 0 3px 3px;
`;

const FieldLabel = styled.div`
  font-size: 12.500px;
  color: #444;
  padding-left: 13px;
  height: 30px;
  display: flex;
  align-items: center;
`;

const FieldWell = styled.div`
  width: 182px;
  height: 37px;
  margin-left: 5px;
  border: 1px dotted #c8c6c4;
  padding: 3px 2px;
`;

const FieldPill = styled.div`
  height: 23px;
  background: #ebebeb;
  border: 1px solid #c8c6c4;
  border-bottom-width: 2px;
  border-radius: 2px;
  font-size: 12.500px;
  color: #444;
  display: flex;
  align-items: center;
  justify-content: space-between;
  padding: 0 3px 0 4px;
`;

const PillIcons = styled.div`
  display: flex;
  align-items: center;
  gap: 2px;
`;

const DrillTitle = styled.h3`
  margin: 16px 0 0 15px;
  font-size: 16px;
  font-weight: 500;
  line-height: 24px;
  color: #333;
`;

const OptionLabel = styled.div`
  font-size: 12.500px;
  line-height: 18px;
  color: #484644;
  margin: ${(p) => p.$mt ?? 14}px 0 0 10px;
`;

const Toggle = styled.div`
  display: flex;
  align-items: center;
  font-size: 12.500px;
  color: #555;
  height: 18px;
  margin: 14px 0 0 19px;
`;

const ToggleSwitch = styled.div`
  display: flex;
  flex-direction: ${(p) => (p.$on ? "row-reverse" : "row")};
  align-items: center;
  margin-left: 4px;
`;

const ToggleTrack = styled.i`
  width: 21px;
  height: 2px;
  background: #555;
`;

const ToggleKnob = styled.i`
  width: 12px;
  height: 12px;
  border-radius: 50%;
  border: 2px solid #555;
  background: ${(p) => (p.$on ? "#555" : "transparent")};
`;

const PaneScroll = styled.div`
  position: absolute;
  right: 1px;
  top: 288px;
  width: 5px;
  height: 219px;
  background: #cfcdcb;
  border-radius: 3px;
`;

const FieldsPane = styled.section`
  width: 194px;
  flex-shrink: 0;
`;

const SearchBox = styled.div`
  width: 185px;
  height: 31px;
  margin: 3px 0 0 4px;
  background: #fff;
  border: 1px solid #c8c6c4;
  border-radius: 2px;
  font-size: 13px;
  color: #444;
  display: flex;
  align-items: center;
  gap: 8px;
  padding-left: 13px;
`;

const FieldsBlank = styled.div`
  width: 178px;
  height: 331px;
  background: #fff;
  position: relative;
  &::after {
    content: "";
    position: absolute;
    left: 33px;
    bottom: -3px;
    width: 8px;
    height: 3px;
    background: #eec96e;
    border-radius: 0 0 4px 4px;
  }
`;

const TableRow = styled.div`
  height: 34px;
  padding-left: 3px;
  display: flex;
  align-items: center;
  font-size: 12.500px;
  color: #444;
  svg + svg { margin-left: 6px; }
  span { margin-left: 14px; }
`;

const CheckRow = styled.div`
  height: 26px;
  margin-top: ${(p) => p.$mt || 0}px;
  padding-left: 34px;
  display: flex;
  align-items: center;
  font-size: 12.500px;
  color: #555;
`;

const CheckBox = styled.i`
  width: 13px;
  height: 13px;
  border: 1px solid #777;
  border-radius: 2px;
`;

const CalcSlot = styled.div`
  width: 27px;
  padding-left: 5px;
  display: flex;
  align-items: center;
`;

const FieldsFooter = styled.div`
  display: flex;
  align-items: center;
  height: 22px;
  margin-top: 1px;
  padding-left: 1px;
`;

const FooterBlank = styled.div`
  width: 162px;
  height: 22px;
  background: #fff;
  margin-left: -1px;
`;

const StatusBar = styled.footer`
  height: 23px;
  flex-shrink: 0;
  border-top: 2px solid #dcdad8;
  padding: 0 5px;
  font-size: 12px;
  color: #444;
  display: flex;
  align-items: center;
  justify-content: space-between;
  white-space: nowrap;
`;

const StatusRight = styled.div`
  display: flex;
  gap: 14px;
  font-size: 11.500px;
`;

const Taskbar = styled.div`
  flex: 1;
  background: #fff;
  border-top: 2px solid #5a9aa8;
  border-left: 1px solid #5a9aa8;
  display: flex;
  justify-content: flex-end;
`;

const TaskTile = styled.div`
  width: 20px;
  background: #5bc5ea;
  overflow: hidden;
  font-size: 12px;
  line-height: 17px;
  color: #333;
  padding-top: 2px;
  span { display: block; margin-left: -3px; }
`;
